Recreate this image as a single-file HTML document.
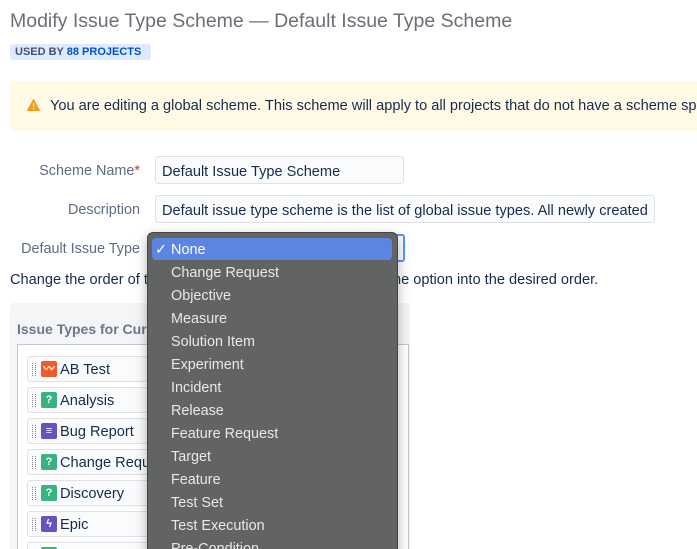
<!DOCTYPE html>
<html style="overflow:hidden;height:549px"><head><style>
body{margin:0;width:697px;height:549px;overflow:hidden;background:#fff;font-family:"Liberation Sans",sans-serif;position:relative;color:#172b4d}
.a{position:absolute}
.lbl{position:absolute;right:557px;font-size:14.4px;color:#5e6c84;text-align:right;white-space:nowrap}
.inp{position:absolute;left:155px;height:28px;border:1px solid #dfe1e6;background:#fafbfc;border-radius:3px;font-size:14.6px;line-height:30px;padding-left:6px;box-sizing:border-box;white-space:nowrap;overflow:hidden;color:#172b4d}
.it{position:absolute;left:27px;width:130px;height:26px;border:1px solid #dfe1e6;border-radius:3px;background:#fafbfc;box-sizing:border-box;font-size:14.6px;line-height:26px;padding-left:32px;white-space:nowrap;overflow:hidden}
.it i{position:absolute;left:4px;top:6px;width:2px;height:13px;border-left:1px dotted #888;border-right:1px dotted #888}
.it b{position:absolute;left:13px;top:4px;width:16px;height:16px;border-radius:2px;color:#fff;font-size:11px;line-height:16px;text-align:center;font-weight:bold}
.dd{position:absolute;left:147px;top:232px;width:251px;height:330px;background:#626363;border:1px solid #444;border-radius:6px;box-sizing:border-box;box-shadow:0 4px 12px rgba(0,0,0,.3)}
.dd div{position:absolute;left:23px;font-size:14.4px;color:#e8e8e8;white-space:nowrap;margin-top:1px}
.wrap{position:absolute;left:0;top:0;width:697px;height:549px;overflow:hidden}
</style></head><body><div class="wrap">
<div class="a" style="left:10px;top:10px;font-size:19.5px;color:#6b6e76">Modify Issue Type Scheme — Default Issue Type Scheme</div>
<div class="a" style="left:10px;top:44px;width:141px;height:16px;background:#deebff;border-radius:3px;font-size:11px;font-weight:bold;line-height:16px;color:#42526e;padding-left:5px;box-sizing:border-box">USED BY <span style="color:#0052cc">88 PROJECTS</span></div>
<div class="a" style="left:10px;top:81px;width:700px;height:50px;background:#fffae6;border-radius:3px"></div>
<svg class="a" style="left:27px;top:99px" width="13" height="12" viewBox="0 0 13 12"><path d="M6.5 0.5L12.5 11.5H0.5Z" fill="#f79a22" stroke="#f79a22" stroke-linejoin="round"/><rect x="6" y="4" width="1.2" height="4" fill="#fff"/><rect x="6" y="9" width="1.2" height="1.2" fill="#fff"/></svg>
<div class="a" style="left:50px;top:98px;font-size:14.6px;color:#172b4d;white-space:nowrap">You are editing a global scheme. This scheme will apply to all projects that do not have a scheme specified.</div>
<div class="lbl" style="top:163px">Scheme Name<span style="color:#de350b">*</span></div>
<div class="inp" style="top:156px;width:249px">Default Issue Type Scheme</div>
<div class="lbl" style="top:202px">Description</div>
<div class="inp" style="top:195px;width:500px">Default issue type scheme is the list of global issue types. All newly created</div>
<div class="lbl" style="top:241px">Default Issue Type</div>
<div class="inp" style="top:234px;width:250px;border:2px solid #4c9aff;background:#fff"></div>
<div class="a" style="left:10px;top:272px;font-size:14.6px;white-space:nowrap">Change the order of the options by dragging and dropping the option into the desired order.</div>
<div class="a" style="left:10px;top:303px;width:400px;height:260px;background:#f4f5f7;border-radius:4px"></div>
<div class="a" style="left:17px;top:321px;font-size:14px;font-weight:bold;color:#6b778c;white-space:nowrap">Issue Types for Current Scheme</div>
<div class="a" style="left:17px;top:344px;width:390px;height:220px;background:#fff;border:1px solid #c1c7d0"></div>
<div class="it" style="top:356px"><i></i><b style="background:#f15b2a">〰</b>AB Test</div>
<div class="it" style="top:387px"><i></i><b style="background:#36b37e">?</b>Analysis</div>
<div class="it" style="top:418px"><i></i><b style="background:#6554c0">≡</b>Bug Report</div>
<div class="it" style="top:449px"><i></i><b style="background:#36b37e">?</b>Change Request</div>
<div class="it" style="top:480px"><i></i><b style="background:#36b37e">?</b>Discovery</div>
<div class="it" style="top:511px"><i></i><b style="background:#6554c0">ϟ</b>Epic</div>
<div class="it" style="top:542px"><i></i><b style="background:#36b37e">?</b></div>
<div class="dd">
<div style="left:4px;top:5px;width:240px;height:22px;background:#5b84e3;border-radius:4px;margin-top:0"></div>
<div style="left:7px;top:8px;color:#fff">✓ None</div>
<div style="top:31px">Change Request</div>
<div style="top:54px">Objective</div>
<div style="top:77px">Measure</div>
<div style="top:100px">Solution Item</div>
<div style="top:123px">Experiment</div>
<div style="top:146px">Incident</div>
<div style="top:169px">Release</div>
<div style="top:192px">Feature Request</div>
<div style="top:215px">Target</div>
<div style="top:238px">Feature</div>
<div style="top:261px">Test Set</div>
<div style="top:284px">Test Execution</div>
<div style="top:307px">Pre-Condition</div>
</div>
</div></body></html>
